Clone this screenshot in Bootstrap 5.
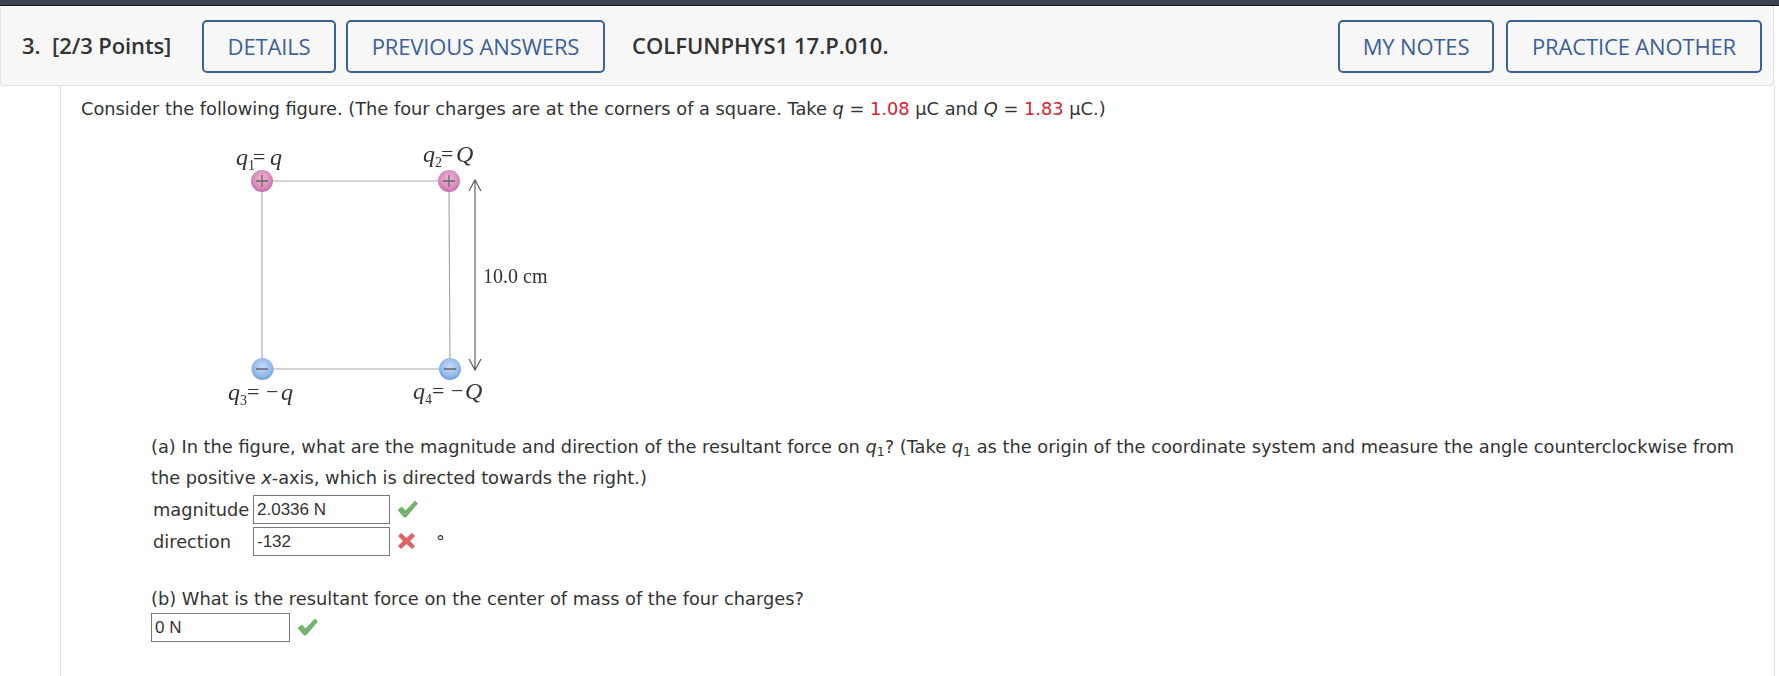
<!DOCTYPE html>
<html lang="en">
<head>
<meta charset="utf-8">
<title>Question 3</title>
<link href="https://cdn.jsdelivr.net/npm/bootstrap@5.3.0/dist/css/bootstrap.min.css" rel="stylesheet">
<style>
html,body{height:676px;overflow:hidden;background:#fff}
body{font-family:"DejaVu Sans",Verdana,sans-serif;font-size:17.8px;color:#333;line-height:31px}
.topstrip{height:6px;background:#3d4451;border-bottom:1px solid #16181c}
.qhead{height:80px;margin-right:5px;background:#f7f7f7;border:1px solid #e2e2e2;border-top:0;border-left:1px solid #e8e8e8;padding:2px 11px 0 21px;font-family:"Open Sans",sans-serif;color:#333;font-size:22px;border-radius:0 0 3px 3px}
.qnum{font-weight:600;width:180px;letter-spacing:-.1px;white-space:nowrap;padding-bottom:2px}
.qnum span{margin-left:6px}
.hbtn{height:53px;border:2px solid #3b5f9b;border-radius:5px;color:#3b5f9b;background:#f7f7f7;font-family:"Open Sans",sans-serif;font-size:22px;font-weight:500;line-height:1;display:inline-flex;align-items:center;justify-content:center;letter-spacing:-.15px;white-space:nowrap;padding-bottom:2px}
.btn-details{width:134px}
.btn-prev{width:259px;margin-left:10px}
.qcode{font-weight:600;margin-left:27px;white-space:nowrap;padding-bottom:2px}
.btn-notes{width:156px}
.btn-prac{width:256px;margin-left:12px}
.qbody{margin-left:60px;margin-right:4px;height:590px;border-left:1px solid #ddd;border-right:1px solid #ddd;padding-left:20px}
.qline{margin:0;white-space:nowrap}
.first{padding-top:7px}
.red{color:#d2222d}
.fig{display:block;width:490px;height:295px}
.parta{padding-left:70px;margin-top:12px}
.ans-row{height:32px;padding-left:2px}
.ans-label{width:100px;line-height:29px}
.ans-input{width:137px;height:29px;border:1px solid #777;border-radius:0;padding:1px 3px 0;font-family:"Liberation Sans",Arial,sans-serif;font-size:17px;line-height:25px;color:#333;background:#fff;outline:0;box-shadow:none}
.partb{margin-top:30px;line-height:24px}
.bwide{width:139px}
.rowb{padding-left:0}
.tick{margin-left:7px;flex:none}
.deg{margin-left:20px;line-height:33px;align-self:flex-start}
sub.qsub{font-size:12.500px;bottom:-.25em}
</style>
</head>
<body>
<div class="topstrip"></div>
<div class="qhead d-flex align-items-center">
  <div class="qnum">3. <span>[2/3 Points]</span></div>
  <a class="hbtn btn-details text-decoration-none" href="#">DETAILS</a>
  <a class="hbtn btn-prev text-decoration-none" href="#">PREVIOUS ANSWERS</a>
  <div class="qcode">COLFUNPHYS1 17.P.010.</div>
  <a class="hbtn btn-notes ms-auto text-decoration-none" href="#">MY NOTES</a>
  <a class="hbtn btn-prac text-decoration-none" href="#">PRACTICE ANOTHER</a>
</div>
<div class="qbody">
  <p class="qline first">Consider the following figure. (The four charges are at the corners of a square. Take <i>q</i> = <span class="red">1.08</span> µC and <i>Q</i> = <span class="red">1.83</span> µC.)</p>
  <svg class="fig" viewBox="0 0 490 295" xmlns="http://www.w3.org/2000/svg">
    <defs>
      <radialGradient id="gp" cx="50%" cy="40%" r="60%"><stop offset="0" stop-color="#eeb6d6"/><stop offset=".7" stop-color="#d98abb"/><stop offset="1" stop-color="#c668a4"/></radialGradient>
      <radialGradient id="gn" cx="50%" cy="40%" r="60%"><stop offset="0" stop-color="#c6dbf5"/><stop offset=".7" stop-color="#93b9ea"/><stop offset="1" stop-color="#6f9cd8"/></radialGradient>
      <filter id="soft"><feGaussianBlur stdDeviation=".4"/></filter>
    </defs>
    <g filter="url(#soft)">
      <path d="M181 57H368M181 57V245M368 57L369 245M181 245H369" fill="none" stroke="#aaa" stroke-width="1.2"/>
      <circle cx="181" cy="57" r="11" fill="url(#gp)"/>
      <circle cx="368" cy="57" r="11" fill="url(#gp)"/>
      <circle cx="181.500" cy="245" r="11" fill="url(#gn)"/>
      <circle cx="369" cy="245" r="11" fill="url(#gn)"/>
      <path d="M175 57H187M181 51V63M362 57H374M368 51V63M175 245H187M363 245H375" stroke="#666" stroke-width="1.3" fill="none"/>
      <path d="M394 56V246M388 67L394 56L400 67M388 235L394 246L400 235" stroke="#555" stroke-width="1.1" fill="none"/>
      <g font-family="'Liberation Serif',serif" font-size="24" fill="#333">
        <text x="155" y="41" font-style="italic">q</text><text x="167" y="46" font-size="14">1</text><text x="172" y="40" font-size="22">=</text><text x="189" y="41" font-style="italic">q</text>
        <text x="342" y="38" font-style="italic">q</text><text x="354" y="43" font-size="14">2</text><text x="360" y="37" font-size="22">=</text><text x="375" y="38" font-style="italic">Q</text>
        <text x="147" y="276" font-style="italic">q</text><text x="159" y="281" font-size="14">3</text><text x="166" y="275" font-size="22">=</text><text x="185" y="275" font-size="22">−</text><text x="200" y="276" font-style="italic">q</text>
        <text x="332" y="275" font-style="italic">q</text><text x="344" y="280" font-size="14">4</text><text x="351" y="274" font-size="22">=</text><text x="370" y="274" font-size="22">−</text><text x="384" y="275" font-style="italic">Q</text>
        <text x="402" y="159" font-size="20">10.0 cm</text>
      </g>
    </g>
  </svg>
  <div class="parta">
    <p class="qline">(a) In the figure, what are the magnitude and direction of the resultant force on <i>q</i><sub class="qsub">1</sub>? (Take <i>q</i><sub class="qsub">1</sub> as the origin of the coordinate system and measure the angle counterclockwise from</p>
    <p class="qline">the positive <i>x</i>-axis, which is directed towards the right.)</p>
    <div class="ans-row d-flex align-items-center">
      <div class="ans-label">magnitude</div>
      <input class="ans-input" type="text" readonly value="2.0336 N">
      <svg class="tick" width="21" height="18" viewBox="0 0 21 18"><path d="M1 10L5 7L8.500 11L18 1L20.500 3.500L9 17H7Z" fill="#73b56a" stroke="#5b9a55" stroke-width=".6"/></svg>
    </div>
    <div class="ans-row d-flex align-items-center">
      <div class="ans-label">direction</div>
      <input class="ans-input" type="text" readonly value="-132">
      <svg class="tick" width="19" height="18" viewBox="0 0 19 18"><path d="M1 4L4 1L9.500 6L15 1L18 4L13 9L18 14L15 17L9.500 12L4 17L1 14L6 9Z" fill="#de6464"/></svg>
      <span class="deg">°</span>
    </div>
    <p class="qline partb">(b) What is the resultant force on the center of mass of the four charges?</p>
    <div class="ans-row rowb d-flex align-items-center"><input class="ans-input bwide" type="text" readonly value="0 N">
      <svg class="tick" width="21" height="18" viewBox="0 0 21 18"><path d="M1 10L5 7L8.500 11L18 1L20.500 3.500L9 17H7Z" fill="#73b56a" stroke="#5b9a55" stroke-width=".6"/></svg>
    </div>
  </div>
</div>
</body>
</html>
